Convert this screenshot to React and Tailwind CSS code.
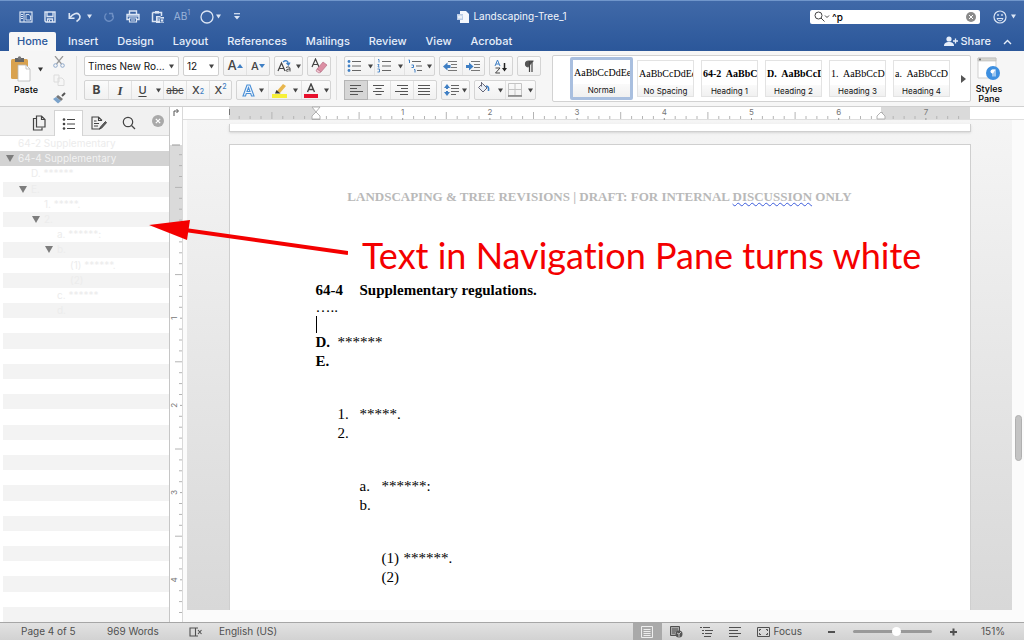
import React from "react";

const INCH = 87.2;

function Caret({ className = "" }) {
  return (
    <svg viewBox="0 0 6 5" className={`h-[5px] w-[5px] shrink-0 ${className}`} aria-hidden="true">
      <path d="M0 0h6L3 5z" fill="currentColor" />
    </svg>
  );
}

function Icon({ w = 16, h = 16, children }) {
  return (
    <svg width={w} height={h} viewBox={`0 0 ${w} ${h}`} fill="none" stroke="currentColor" className="shrink-0" aria-hidden="true">
      {children}
    </svg>
  );
}

function IconButton({ label, className = "", children, ...rest }) {
  return (
    <button type="button" aria-label={label} className={`flex items-center justify-center ${className}`} {...rest}>
      {children}
    </button>
  );
}

function TitleBar() {
  return (
    <div className="grid h-[31px] grid-cols-[1fr_auto_1fr] items-center">
      <div className="flex items-center pl-[18px] text-[#dbe5f4]">
        <IconButton label="Toggle sidebar" className="w-4">
          <Icon w={14} h={12}><rect x="1" y="1" width="12" height="10" strokeWidth="1.2" /><path d="M5 1v10M2 3.500h2M2 5.500h2M2 7.500h2" /><path d="M7 3.500h3l1.500 1.500v4H7z" strokeWidth=".9" /></Icon>
        </IconButton>
        <IconButton label="Save" className="ml-2 w-4">
          <Icon w={12} h={12}><path d="M1 1h10v10H2L1 10z" strokeWidth="1.400" /><path d="M3 1v4.500h6V1M3.500 11V8h5v3" strokeWidth="1.300" /><path d="M5 9h1v2H5z" fill="currentColor" stroke="none" /></Icon>
        </IconButton>
        <IconButton label="Undo" className="ml-[9px] w-4">
          <Icon w={14} h={12}><path d="M2 6.500C5 2.500 9 1.500 11 3.500s1 5-2.500 7" strokeWidth="1.700" /><path d="M1.300 2v5.300H6.500" strokeWidth="1.600" /></Icon>
        </IconButton>
        <Caret className="ml-1" />
        <IconButton label="Repeat" className="ml-[9px] w-4 text-[#6d8fc4]">
          <Icon w={12} h={12}><path d="M3.500 2.500a4.300 4.300 0 1 0 5.500.3M6 2.500h3.500V6" strokeWidth="1.300" /></Icon>
        </IconButton>
        <IconButton label="Print" className="ml-2 w-4">
          <Icon w={14} h={13}><path d="M3.500 4V1h7v3M3 9.500H1V4.500h12v5h-2" strokeWidth="1.400" /><path d="M1 6h12" strokeWidth="1.200" /><path d="M3.500 8h7v4h-7zM5 10h4" strokeWidth="1.200" /></Icon>
        </IconButton>
        <IconButton label="Paste options" className="ml-[9px] w-4">
          <Icon w={14} h={14}><path d="M1.500 2.500h9V6M1.500 2.500v9H5" strokeWidth="1.500" /><path d="M4 1h4v2.500H4zM5 6h4l1 1h3v6H5z" fill="currentColor" stroke="none" /><path d="M6.500 8h3M6.500 10h2" stroke="#3b64a3" /><rect x="9.500" y="9" width="3" height="3" stroke="#3b64a3" strokeWidth=".8" /></Icon>
        </IconButton>
        <IconButton label="Insert footnote" className="ml-2 w-4 text-[10px] text-[#9db5da]">
          AB<sup className="text-[7px]">1</sup>
        </IconButton>
        <IconButton label="Shapes" className="ml-[9px] w-4">
          <Icon w={14} h={14}><circle cx="7" cy="7" r="6" strokeWidth="1.300" /></Icon>
        </IconButton>
        <Caret className="ml-[1px]" />
        <IconButton label="Customize toolbar" className="ml-3 w-2">
          <Icon w={8} h={7}><path d="M1 .7h6" strokeWidth="1.200" /><path d="M1 3h6L4 6.500z" fill="currentColor" stroke="none" /></Icon>
        </IconButton>
      </div>
      <h1 className="flex items-center gap-1 text-[10px] text-[#f2f6fc]">
        <Icon w={12} h={12}><path d="M3 0h6l3 3v9H3z" fill="#f4f7fc" stroke="none" /><path d="M0 3h6v6H0z" fill="#b9cbe6" stroke="none" /><path d="M1 4.500l1 3 1-3 1 3 1-3" stroke="#fff" strokeWidth=".8" /></Icon>
        Landscaping-Tree_1
      </h1>
      <div className="flex items-center justify-end pr-2">
        <label className="flex h-[14px] w-[170px] items-center rounded-xs bg-white px-1 text-[#444]">
          <Icon w={16} h={11}><circle cx="4.500" cy="4.500" r="3.500" /><path d="M7 7l3.500 3.500" /><path d="M11 4.500l2 2 2-2" /></Icon>
          <input aria-label="Search in document" defaultValue="^p" className="ml-[2px] w-0 min-w-0 flex-1 bg-transparent text-[10px] leading-3 font-medium text-black outline-none" />
          <button type="button" aria-label="Clear search">
            <Icon w={10} h={10}><circle cx="5" cy="5" r="5" fill="#8a8a8a" stroke="none" /><path d="M3 3l4 4M7 3L3 7" stroke="#fff" /></Icon>
          </button>
        </label>
        <IconButton label="Feedback" className="ml-[13px] gap-1 text-[#dbe5f4]">
          <Icon w={14} h={14}><circle cx="7" cy="7" r="6" strokeWidth="1.200" /><path d="M4 8.500c1 3 5 3 6 0z" /><path d="M5 4v2M9 4v2" strokeWidth="1.300" /></Icon>
          <Caret className="h-1 w-1" />
        </IconButton>
      </div>
    </div>
  );
}

function TabRow() {
  const tabs = ["Insert", "Design", "Layout", "References", "Mailings", "Review", "View", "Acrobat"];
  return (
    <nav aria-label="Ribbon" className="flex h-[19px] items-center pl-[9px] text-[11px] font-medium text-[#e6eefa]">
      <button type="button" className="h-[19px] rounded-t-xs bg-[#f7f7f7] px-2 text-[#2b579a]">Home</button>
      <div className="ml-3 flex gap-[19px]">
        {tabs.map((t) => <button key={t} type="button">{t}</button>)}
      </div>
      <button type="button" className="ml-auto flex items-center gap-[3px]">
        <Icon w={14} h={11}><circle cx="5" cy="3" r="2.600" fill="currentColor" stroke="none" /><path d="M0 10c0-3 2-4 5-4s5 1 5 4z" fill="currentColor" stroke="none" /><path d="M11.500 2.500v5M9 5h5" strokeWidth="1.300" /></Icon>
        Share
      </button>
      <IconButton label="Collapse ribbon" className="mr-3 ml-3">
        <Icon w={9} h={6}><path d="M1 5l3.500-3.500L8 5" strokeWidth="1.400" /></Icon>
      </IconButton>
    </nav>
  );
}

function Group({ className = "", children }) {
  return (
    <div className={`flex h-5 items-stretch rounded-xs border border-[#d4d4d4] bg-linear-to-b from-[#fbfbfb] to-[#f1f1f1] text-[#444] ${className}`}>
      {children}
    </div>
  );
}

function Combo({ label, value, className }) {
  return (
    <div className={`relative flex h-5 items-center rounded-xs border border-[#cfcfcf] bg-white ${className}`}>
      <select aria-label={label} className="w-full appearance-none bg-transparent pl-[3px] text-[10px] leading-4 text-[#111] outline-none">
        <option>{value}</option>
      </select>
      <Caret className="pointer-events-none absolute right-1 text-[#444]" />
    </div>
  );
}

const divide = "border-l border-[#e2e2e2]";

function ListIcon({ kind }) {
  return (
    <Icon w={15} h={14}>
      {kind === "bullets" && <g fill="#3f7fc4" stroke="none"><circle cx="2" cy="2.500" r="1.400" /><circle cx="2" cy="7" r="1.400" /><circle cx="2" cy="11.500" r="1.400" /></g>}
      {kind === "numbers" && <path d="M1 .5h1v3M.5 5.500h1.500L1 8h1.500M.5 10h2v3H.5" stroke="#3f7fc4" strokeWidth=".9" />}
      {kind === "levels" && <path d="M.5 1h1v3M3.500 6h2v2.500h-2M6 10.500h1v3" stroke="#3f7fc4" />}
      {kind === "levels"
        ? <path d="M4 2.500h9M8 7h6M9 11.500h5" stroke="#666" />
        : <path d="M5 2.500h9M5 7h9M5 11.500h9" stroke="#666" />}
    </Icon>
  );
}

function AlignIcon({ d }) {
  return <Icon w={13} h={10}><path d={d} stroke="#555" /></Icon>;
}

function IndentIcon({ flip }) {
  return (
    <Icon w={15} h={11}>
      <path d="M5 .5h9M8 3.500h6M8 6.500h6M5 9.500h9" stroke="#777" />
      <path d={flip ? "M0 4h3V1.500L7.500 5.500 3 9.500V7H0z" : "M7.500 4H4.500V1.500L0 5.500l4.500 4V7h3z"} fill="#3f7fc4" stroke="none" />
    </Icon>
  );
}

function StyleCard({ sample, name, bold, selected }) {
  return (
    <button
      type="button"
      className={`flex shrink-0 flex-col overflow-hidden bg-white text-center ${selected ? "h-[43px] w-[63px] rounded-xs border-3 border-[#a9bfdf]" : "h-[37px] w-[57px] border border-[#e3e3e3]"}`}
    >
      <span className={`flex h-6 w-full shrink-0 items-center overflow-hidden px-px font-[Liberation_Serif,serif] text-[10px] whitespace-pre text-black ${bold ? "font-bold" : ""}`}>{sample}</span>
      <span className="w-full flex-1 bg-linear-to-b from-[#fafafa] to-[#f0f0f0] text-[8px] leading-3 text-[#111]">{name}</span>
    </button>
  );
}

function Ribbon() {
  const cards = [
    ["AaBbCcDdEe", "No Spacing", false],
    ["64-2  AaBbC", "Heading 1", true],
    ["D.  AaBbCcD", "Heading 2", true],
    ["1.  AaBbCcD", "Heading 3", false],
    ["a.  AaBbCcD", "Heading 4", false],
  ];
  return (
    <section aria-label="Home tools" className="flex h-14 shrink-0 items-start border-b border-[#d0d0d0] bg-[#f6f6f6] pt-[5px] text-[#333]">
      <button type="button" className="flex w-[52px] flex-col items-center">
        <span className="flex items-center gap-[6px]">
          <Icon w={22} h={26}><rect x="1" y="3" width="17" height="20" rx="1.500" fill="#d9a24f" stroke="none" /><path d="M5 2h9v4H5z" fill="#666" stroke="none" /><circle cx="9.500" cy="2" r="1.700" fill="#777" stroke="none" /><path d="M8 9h8l4 4v12H8z" fill="#fff" stroke="#b9b9b9" strokeWidth=".8" /><path d="M16 9v4h4" stroke="#b9b9b9" strokeWidth=".8" /></Icon>
          <Caret />
        </span>
        <span className="mt-[3px] text-[9px] leading-[10px] font-medium text-black">Paste</span>
      </button>
      <div className="flex w-[14px] flex-col items-center gap-[6px]">
        <IconButton label="Cut"><Icon w={12} h={12}><path d="M2 0l6.500 8M10 0L3.500 8" stroke="#999" strokeWidth="1.200" /><circle cx="2.500" cy="9.500" r="1.800" stroke="#8ea9cc" /><circle cx="9.500" cy="9.500" r="1.800" stroke="#8ea9cc" /></Icon></IconButton>
        <IconButton label="Copy"><Icon w={12} h={12}><path d="M1 1h5v7H1zM5 4h4l2 2v5.500H5z" stroke="#dcdcdc" fill="#f6f6f6" /></Icon></IconButton>
        <IconButton label="Format painter"><Icon w={13} h={12}><path d="M12 1L9 4" stroke="#555" strokeWidth="2" /><path d="M5 3l5 4-2 2-5-4z" fill="#777" stroke="none" /><path d="M3 5l5 4-3 2.500L0 7z" fill="#7ba3cb" stroke="none" /></Icon></IconButton>
      </div>
      <div className="mx-[7px] ml-[10px] h-11 w-px bg-[#e0e0e0]" />
      <div className="flex flex-col gap-1">
        <div className="flex gap-1">
          <Combo label="Font" value="Times New Ro..." className="w-[95px]" />
          <Combo label="Font size" value="12" className="w-[36px]" />
          <Group className="w-[47px]">
            <IconButton label="Grow font" className="flex-1 text-[13px] font-medium">A<svg viewBox="0 0 6 4" className="h-1 w-[6px]"><path d="M0 4h6L3 0z" fill="#3f7fc4" /></svg></IconButton>
            <IconButton label="Shrink font" className={`flex-1 text-[11px] font-medium ${divide}`}>A<svg viewBox="0 0 6 4" className="h-1 w-[6px]"><path d="M0 0h6L3 4z" fill="#3f7fc4" /></svg></IconButton>
          </Group>
          <Group className="w-[29px]">
            <IconButton label="Change case" className="flex-1 gap-1"><Icon w={15} h={14}><path d="M1 12L4.500 4 8 12M2.500 9.500h4" strokeWidth="1.200" /><path d="M9 8.500c3-1.500 4 0 4 1v3M13 10c-5 0-5 3-1.500 2" /><path d="M6 3c3-2.500 5-1 5.500 2M9.500 4l2 2 1.500-2.500" stroke="#3f7fc4" strokeWidth="1.300" /></Icon><Caret /></IconButton>
          </Group>
          <Group className="w-[24px]">
            <IconButton label="Clear formatting" className="flex-1"><Icon w={17} h={16}><path d="M1 9L4.500 1 8 9M2.500 6.500h4" strokeWidth="1.200" /><path d="M6 11l6-7 4 3-6 7z" fill="#dc8fa4" stroke="#b0647c" strokeWidth=".6" /><path d="M6 11l4 3-2 1-3-2z" fill="#f4cad5" stroke="#b0647c" strokeWidth=".6" /></Icon></IconButton>
          </Group>
        </div>
        <div className="flex gap-1">
          <Group className="w-[148px]">
            <button type="button" className="w-[23px] text-[12px] font-bold">B</button>
            <button type="button" className={`w-[23px] font-[Liberation_Serif,serif] text-[13px] font-bold italic ${divide}`}>I</button>
            <button type="button" className={`w-[22px] text-[11px] font-medium underline underline-offset-2 ${divide}`}>U</button>
            <IconButton label="Underline style" className="w-[10px]"><Caret /></IconButton>
            <button type="button" className={`w-[23px] text-[10px] line-through ${divide}`}>abc</button>
            <IconButton label="Subscript" className={`w-[23px] text-[11px] font-medium ${divide}`}>X<sub className="text-[7px] text-[#3f7fc4]">2</sub></IconButton>
            <IconButton label="Superscript" className={`flex-1 text-[11px] font-medium ${divide}`}>X<sup className="text-[7px] text-[#3f7fc4]">2</sup></IconButton>
          </Group>
          <Group className="w-[95px]">
            <IconButton label="Text effects" className="w-[31px] gap-1"><Icon w={13} h={13}><path d="M1 12L5 1h3l4 11H9.500l-.8-2.500H4.300L3.500 12zM5 7.500h3L6.500 3.500z" stroke="#4a8fd6" strokeWidth="1.100" fill="#eef5fd" /></Icon><Caret /></IconButton>
            <IconButton label="Highlight color" className={`w-[33px] gap-[6px] ${divide}`}><Icon w={15} h={15}><path d="M5 8l6-7 3 2-6 7z" fill="#e8b64d" stroke="none" /><path d="M4.500 7l4 3.500H3z" fill="#333" stroke="none" /><path d="M0 11h15v4H0z" fill="#f7f03a" stroke="none" /></Icon><Caret /></IconButton>
            <IconButton label="Font color" className={`flex-1 gap-[6px] ${divide}`}><Icon w={14} h={15}><path d="M3.500 9L7 1l3.500 8M4.700 6.500h4.600" strokeWidth="1.400" /><path d="M0 11h14v4H0z" fill="#e8112d" stroke="none" /></Icon><Caret /></IconButton>
          </Group>
        </div>
      </div>
      <div className="mx-[7px] ml-[5px] h-11 w-px bg-[#e0e0e0]" />
      <div className="flex flex-col gap-1">
        <div className="flex gap-1">
          <Group className="w-[91px]">
            <IconButton label="Bullets" className="flex-1 gap-[6px]"><ListIcon kind="bullets" /><Caret className="size-1" /></IconButton>
            <IconButton label="Numbering" className={`flex-1 gap-[6px] ${divide}`}><ListIcon kind="numbers" /><Caret className="size-1" /></IconButton>
            <IconButton label="Multilevel list" className={`flex-1 gap-1 ${divide}`}><ListIcon kind="levels" /><Caret className="size-1" /></IconButton>
          </Group>
          <Group className="w-[46px]">
            <IconButton label="Decrease indent" className="flex-1"><IndentIcon /></IconButton>
            <IconButton label="Increase indent" className={`flex-1 ${divide}`}><IndentIcon flip /></IconButton>
          </Group>
          <Group className="w-[24px]">
            <IconButton label="Sort" className="flex-1"><Icon w={14} h={15}><path d="M1 7l2.500-6L6 7M2 5h3" stroke="#3f7fc4" /><path d="M1.500 9H6L1.500 14H6" /><path d="M10.500 4v7" stroke="#222" strokeWidth="1.500" /><path d="M8 9h5l-2.500 3.500z" fill="#222" stroke="none" /></Icon></IconButton>
          </Group>
          <Group className="w-[24px]">
            <IconButton label="Show paragraph marks" className="flex-1"><Icon w={10} h={12}><path d="M9.500 1H4.500a3 3 0 0 0 0 6" fill="#555" stroke="#555" strokeWidth="1.200" /><path d="M5.500 1v11M8 1v11" stroke="#444" strokeWidth="1.200" /></Icon></IconButton>
          </Group>
        </div>
        <div className="flex gap-1">
          <Group className="w-[93px]">
            <IconButton label="Align left" className="flex-1 bg-[#d6d6d6] shadow-[0_0_0_1px_#b5b5b5]"><AlignIcon d="M0 .5h11M0 3.500h7M0 6.500h13M0 9.500h8" /></IconButton>
            <IconButton label="Center" className="flex-1"><AlignIcon d="M1 .5h11M3.500 3.500h6M1 6.500h11M3.500 9.500h6" /></IconButton>
            <IconButton label="Align right" className={`flex-1 ${divide}`}><AlignIcon d="M2 .5h11M6 3.500h7M0 6.500h13M5 9.500h8" /></IconButton>
            <IconButton label="Justify" className={`flex-1 ${divide}`}><AlignIcon d="M0 .5h12M0 3.500h12M0 6.500h12M0 9.500h12" /></IconButton>
          </Group>
          <Group className="w-[29px]">
            <IconButton label="Line spacing" className="flex-1 gap-[3px]"><Icon w={15} h={12}><path d="M7 1.500h8M7 4.500h8M7 7.500h8M7 10.500h5" stroke="#666" /><path d="M0 4l3-4 3 4H4v1H2V4zM0 8l3 4 3-4H4V7H2v1z" fill="#3f7fc4" stroke="none" /></Icon><Caret /></IconButton>
          </Group>
          <Group className="w-[62px]">
            <IconButton label="Shading" className="flex-1 items-start gap-2"><Icon w={13} h={13}><path d="M1.500 6.500l4-4 4.500 4.500-4 4z" fill="#e9eef5" stroke="#667" /><path d="M4.500 1v4.500" stroke="#667" /><path d="M9 5c2 0 3 1.500 2.500 5" stroke="#3f7fc4" strokeWidth="1.600" /></Icon><Caret className="mt-[7px]" /></IconButton>
            <IconButton label="Borders" className={`flex-1 gap-[6px] ${divide}`}><Icon w={14} h={14}><path d="M.5 .5h13v12H.5zM7 0v13M0 6.500h14" stroke="#c4c4c4" /><path d="M0 13h14" stroke="#777" strokeWidth="1.400" /></Icon><Caret /></IconButton>
          </Group>
        </div>
      </div>
      <div className="-mt-px ml-[11px] flex h-[47px] min-w-0 flex-1 items-center overflow-hidden rounded-xs border border-[#d2d2d2] bg-white pl-[17px]">
        <StyleCard sample="AaBbCcDdEe" name="Normal" selected />
        <div className="ml-1 flex gap-[7px]">
          {cards.map(([s, n, b]) => <StyleCard key={n} sample={s} name={n} bold={b} />)}
        </div>
        <IconButton label="More styles" className="ml-auto w-[14px] text-[#555]"><Icon w={5} h={8}><path d="M0 0l5 4-5 4z" fill="currentColor" stroke="none" /></Icon></IconButton>
      </div>
      <button type="button" className="mr-[18px] ml-[1px] flex w-[34px] shrink-0 flex-col items-center text-[9px] leading-[10px] font-medium text-black">
        <Icon w={24} h={25}><path d="M1 2h18v20H1z" fill="#fff" stroke="#cfcfcf" /><path d="M1 2h18v3H1z" fill="#d5d5cf" stroke="#bbb" strokeWidth=".6" /><circle cx="3" cy="3.500" r="1" fill="#666" stroke="none" /><circle cx="16" cy="17" r="7" fill="#3d8fe0" stroke="none" /><path d="M18.500 13.500h-3a2 2 0 0 0 0 4h.5" fill="#fff" stroke="none" /><path d="M16 13.500v7M18 13.500v7" stroke="#fff" /></Icon>
        <span className="mt-[3px]">Styles Pane</span>
      </button>
    </section>
  );
}

const outline = [
  { text: "64-2 Supplementary", pad: "pl-[18px]" },
  { text: "64-4 Supplementary", pad: "pl-[6px]", open: true, selected: true },
  { text: "D. ******", pad: "pl-[31px]" },
  { text: "E.", pad: "pl-[19px]", open: true },
  { text: "1. *****.", pad: "pl-11" },
  { text: "2.", pad: "pl-[32px]", open: true },
  { text: "a. ******:", pad: "pl-[57px]" },
  { text: "b.", pad: "pl-[45px]", open: true },
  { text: "(1) ******.", pad: "pl-[70px]" },
  { text: "(2)", pad: "pl-[70px]" },
  { text: "c. ******", pad: "pl-[57px]" },
  { text: "d.", pad: "pl-[57px]" },
];

function NavPane() {
  const rows = Array.from({ length: 32 }, (_, i) => outline[i] || { text: "", pad: "" });
  return (
    <aside aria-label="Navigation pane" className="flex w-[170px] shrink-0 flex-col border-r border-[#c6c6c6] bg-white">
      <div className="flex h-[29px] shrink-0 items-end border-b border-[#dadada] bg-[#f1f1f1] pl-6 text-[#444]">
        <IconButton label="Thumbnails" className="h-6 w-[30px]"><Icon w={14} h={16}><path d="M4.500 1h5l3.500 3.500V12H4.500zM9.500 1v3.500H13" strokeWidth="1.200" /><path d="M4 3.500H1.500V15H10v-2.500" strokeWidth="1.200" /></Icon></IconButton>
        <IconButton label="Document map" className="-mb-px h-[26px] w-[29px] border border-b-0 border-[#d3d3d3] bg-white"><Icon w={14} h={12}><path d="M5 1.500h8M5 6h8M5 10.500h8" strokeWidth="1.200" /><g fill="currentColor" stroke="none"><circle cx="2" cy="1.500" r="1.300" /><circle cx="2" cy="6" r="1.300" /><circle cx="2" cy="10.500" r="1.300" /></g></Icon></IconButton>
        <IconButton label="Reviewing" className="h-6 w-8"><Icon w={16} h={14}><path d="M9 13H1V1h6.500L11 4.500M7.500 1v3.500H11M3 5h2.500M3 7.500h5M3 10h4" strokeWidth="1.100" /><path d="M14.500 5.500L9.500 11l-1 2 2-.8 5-5.500z" fill="#666" /></Icon></IconButton>
        <IconButton label="Find and replace" className="h-6 w-7"><Icon w={14} h={14}><circle cx="6" cy="6" r="4.700" strokeWidth="1.200" /><path d="M9.500 9.500L13 13" strokeWidth="1.300" /></Icon></IconButton>
        <IconButton label="Close pane" className="mr-[5px] ml-auto h-7"><Icon w={12} h={12}><circle cx="6" cy="6" r="6" fill="#a9a9a9" stroke="none" /><path d="M3.800 3.800l4.400 4.400M8.200 3.800L3.800 8.200" stroke="#fff" strokeWidth="1.200" /></Icon></IconButton>
      </div>
      <ul className="flex min-h-0 flex-1 flex-col text-[10px] leading-[15px]">
        {rows.map((r, i) => (
          <li key={i} className={`flex min-h-0 flex-1 basis-0 ${r.selected ? "" : "border-l-3 border-white"} ${r.selected ? "bg-[#d3d3d3] text-[#f2f2f2]" : i % 2 ? "bg-[#f3f3f3] text-[#ececec]" : "text-[#ececec]"}`}>
            <div className={`flex h-[15px] items-center gap-1 ${r.selected ? "" : "-ml-[3px]"} ${r.pad}`}>
              {r.open && (
                <button type="button" aria-label="Collapse">
                  <svg viewBox="0 0 8 7" className="h-[7px] w-2"><path d="M0 0h8L4 7z" fill="#7d7d7d" /></svg>
                </button>
              )}
              <span>{r.text}</span>
            </div>
          </li>
        ))}
      </ul>
    </aside>
  );
}

function HorizontalRuler() {
  const ticks = [];
  for (let i = -8; i <= 60; i++) if (i % 8) ticks.push(i);
  return (
    <div className="flex h-[13px] shrink-0 justify-center border-b border-[#dedede] bg-white pr-3 pl-1">
      <svg viewBox="0 0 741 18" className="h-[18px] w-[741px] shrink-0 overflow-visible" aria-hidden="true">
        <path d="M0 0h87v12H0zM652 0h89v12h-89z" fill="#dadada" />
        {ticks.map((i) => {
          const x = 86.500 + (i * INCH) / 8;
          return x > 0 && x < 738 ? <path key={i} d={i % 4 ? `M${x} 9v3` : `M${x} 5v7`} stroke="#b4b4b4" /> : null;
        })}
        {[1, 2, 3, 4, 5, 6, 7].map((n) => (
          <g key={n}>
            <text x={86.500 + n * INCH} y="8" textAnchor="middle" fontSize="8" fill="#777">{n}</text>
            <path d={`M${86.500 + n * INCH} 11v4`} stroke="#999" />
          </g>
        ))}
        <path d="M.5 2v6" stroke="#777" />
        <path d="M83 0h8l-4 5zM83 12V9l4-4 4 4v3zM83 12.500h8V16h-8z" fill="#fff" stroke="#aaa" strokeWidth=".9" />
        <path d="M648 12V9l4-4 4 4v3z" fill="#fff" stroke="#aaa" strokeWidth=".9" />
      </svg>
    </div>
  );
}

function VerticalRuler() {
  const ticks = [];
  for (let i = -7; i <= 35; i++) if (i % 8) ticks.push(i);
  return (
    <div className="w-[13px] shrink-0 overflow-hidden border-r border-[#d9d9d9] bg-white">
      <svg viewBox="0 0 12 515" className="h-[515px] w-3" aria-hidden="true">
        <path d="M4 9V4h4M6.500 2l2 2-2 2" fill="none" stroke="#555" />
        <path d="M0 38h12v86H0z" fill="#dadada" />
        <path d="M2 38h8" stroke="#999" />
        {ticks.map((i) => {
          const y = 124 + (i * INCH) / 8;
          return <path key={i} d={i % 4 ? `M9 ${y}h3` : `M5 ${y}h7`} stroke="#b4b4b4" />;
        })}
        {[1, 2, 3, 4].map((n) => (
          <g key={n}>
            <text transform={`translate(7 ${124 + n * INCH}) rotate(-90)`} textAnchor="middle" fontSize="8" fill="#777">{n}</text>
            <path d={`M10 ${124 + n * INCH}h2`} stroke="#aaa" />
          </g>
        ))}
      </svg>
    </div>
  );
}

function Item({ label, text, bold, indent = "" }) {
  return (
    <p className={`flex ${indent}`}>
      <span className={`min-w-[22px] ${bold ? "font-bold" : ""}`}>{label}</span>
      <span>{text}</span>
    </p>
  );
}

function Page() {
  return (
    <article className="flex-1 border border-b-0 border-[#cfcfcf] bg-white px-[86px] pt-[42px] font-[Liberation_Serif,serif] text-[15px] leading-[19px] text-black">
      <header className="text-center text-[13px] font-bold whitespace-nowrap text-[#b9b9b9]">
        LANDSCAPING &amp; TREE REVISIONS | DRAFT: FOR INTERNAL{" "}
        <span className="underline decoration-[#3b5bdb] decoration-wavy decoration-1 underline-offset-1">DISCUSSION</span> ONLY
      </header>
      <div className="mt-[76px] flex flex-col gap-[34px]">
        <div>
          <div className="leading-[17px]">
            <h2 className="flex font-bold"><span className="w-11">64-4</span>Supplementary regulations.</h2>
            <p>…..</p>
            <div className="h-[17px] w-px bg-black" />
          </div>
          <Item label="D." text="******" bold />
          <Item label="E." bold />
        </div>
        <div>
          <Item label="1." text="*****." indent="pl-[22px]" />
          <Item label="2." indent="pl-[22px]" />
        </div>
        <div>
          <Item label="a." text="******:" indent="pl-11" />
          <Item label="b." indent="pl-11" />
        </div>
        <div>
          <Item label="(1)" text="******." indent="pl-[66px]" />
          <Item label="(2)" indent="pl-[66px]" />
        </div>
      </div>
    </article>
  );
}

function Annotation() {
  return (
    <div className="pointer-events-none absolute top-[113px] left-[149px] flex items-start gap-[14px] text-[#f40000]">
      <svg viewBox="0 0 199 36" className="h-9 w-[199px] shrink-0" aria-hidden="true">
        <path d="M0 5L41 0L38 20z" fill="currentColor" />
        <path d="M36 10L199 33" stroke="currentColor" strokeWidth="4" />
      </svg>
      <p className="mt-3 font-[Lato,sans-serif] text-[36px] leading-[46px] whitespace-nowrap [font-variant-ligatures:none]">Text in Navigation Pane turns white</p>
    </div>
  );
}

function StatusBar() {
  return (
    <footer className="flex h-[18px] shrink-0 items-center border-t border-[#a6a6a6] bg-linear-to-b from-[#e2e2e2] to-[#d2d2d2] pl-[21px] text-[10px] text-[#505050]">
      <span className="w-[86px]">Page 4 of 5</span>
      <span className="w-[82px]">969 Words</span>
      <IconButton label="Spelling" className="mr-[17px]"><Icon w={13} h={10}><path d="M6.500 1v8M9 1H1v8h8" strokeWidth="1.100" /><path d="M9 3l3.500 4M12.500 3L9 7" strokeWidth="1.100" /></Icon></IconButton>
      <span>English (US)</span>
      <div className="ml-auto flex items-center">
        <IconButton label="Print layout" className="h-[17px] w-[29px] bg-[#a9a9a9] text-[#eee]"><Icon w={12} h={12}><path d="M.5 .5h11v11H.5zM2.500 3.500h7M2.500 5.500h7M2.500 7.500h7M2.500 9.500h7" /></Icon></IconButton>
        <IconButton label="Web layout" className="ml-2 w-[13px]"><Icon w={13} h={12}><path d="M.5 .5h9v9h-9zM2 3h6M2 5h6M2 7h3" fill="#aaa" /><circle cx="9" cy="8" r="3.500" fill="#555" stroke="none" /><path d="M7 7l2 1 2-2M9 8v3" stroke="#ddd" strokeWidth=".8" /></Icon></IconButton>
        <IconButton label="Outline" className="ml-[17px] w-[13px]"><Icon w={13} h={10}><path d="M0 .5h2M3 .5h7M2 3.500h2M5 3.500h8M2 6.500h2M5 6.500h7M4 9.500h7" /></Icon></IconButton>
        <IconButton label="Draft" className="ml-4 w-[12px]"><Icon w={12} h={10}><path d="M0 .5h12M0 3.500h9M0 6.500h12M0 9.500h9" /></Icon></IconButton>
        <button type="button" className="ml-4 flex items-center gap-1"><Icon w={13} h={10}><path d="M.5 .5h12v9H.5z" /><path d="M2.500 4V2.500H4M9 2.500h1.500V4M10.500 6v1.500H9M4 7.500H2.500V6" /></Icon>Focus</button>
        <IconButton label="Zoom out" className="ml-[26px]"><Icon w={7} h={8}><path d="M0 4h7" strokeWidth="2" /></Icon></IconButton>
        <input
          type="range"
          aria-label="Zoom"
          min="0"
          max="100"
          defaultValue="56"
          className="mx-[18px] h-[3px] w-[79px] appearance-none rounded-full bg-[#999] [&::-webkit-slider-thumb]:size-[9px] [&::-webkit-slider-thumb]:appearance-none [&::-webkit-slider-thumb]:rounded-full [&::-webkit-slider-thumb]:bg-white"
        />
        <IconButton label="Zoom in"><Icon w={7} h={8}><path d="M0 4h7M3.500 .5v7" strokeWidth="2" /></Icon></IconButton>
        <span className="ml-6 w-[43px]">151%</span>
      </div>
    </footer>
  );
}

export default function App() {
  return (
    <div className="flex h-screen min-h-[640px] flex-col overflow-hidden bg-white font-[Inter,sans-serif]">
      <div className="shrink-0 border-t border-[#7096cb] bg-linear-to-b from-[#4069a8] to-[#2b579a]">
        <TitleBar />
        <TabRow />
      </div>
      <Ribbon />
      <main className="relative flex min-h-0 flex-1">
        <NavPane />
        <VerticalRuler />
        <div className="flex min-w-0 flex-1 flex-col">
          <HorizontalRuler />
          <div className="flex min-h-0 flex-1 bg-[#fbfbfb] pb-3 pl-1">
            <div className="flex min-w-0 flex-1 flex-col items-center overflow-hidden bg-linear-to-b from-[#f5f5f5] to-[#d8d8d8] pt-1">
              <div className="flex w-[742px] flex-1 flex-col">
                <div className="h-2 border border-t-0 border-[#cfcfcf] bg-white shadow-sm" />
                <div className="h-3" />
                <Page />
              </div>
            </div>
            <div className="flex w-3 flex-col items-center">
              <div className="mt-[295px] h-[46px] w-[7px] rounded-full border border-[#b0b0b0] bg-[#c4c4c4]" />
            </div>
          </div>
        </div>
        <Annotation />
      </main>
      <StatusBar />
    </div>
  );
}
